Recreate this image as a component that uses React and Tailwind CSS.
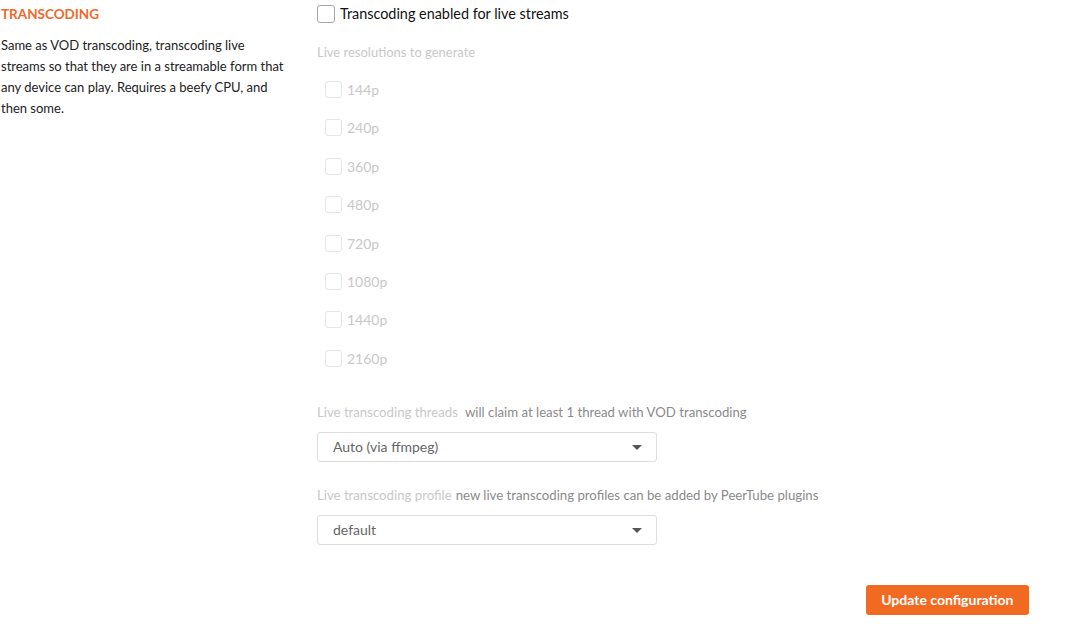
import React from "react";

const res = ["144p", "240p", "360p", "480p", "720p", "1080p", "1440p", "2160p"];

function Caret() {
  return (
    <svg width="10" height="6" viewBox="0 0 10 6" className="absolute right-[14px] top-[12px]">
      <path d="M0 0 L10 0 L5 5 Z" fill="#555" />
    </svg>
  );
}

export default function App() {
  return (
    <div className="w-[1067px] h-[638px] bg-white overflow-hidden" style={{ fontFamily: "Lato, 'Noto Sans', sans-serif" }}>
      <div className="flex">
        <div className="w-[317px] shrink-0 pl-[1px] pt-[6px]">
          <div className="text-[13.5px] font-bold text-[#f1682a] leading-[16px]">TRANSCODING</div>
          <p className="mt-[13px] w-[290px] text-[13px] leading-[21px] text-[#222]">
            Same as VOD transcoding, transcoding live streams so that they are in a streamable form that any device can play. Requires a beefy CPU, and then some.
          </p>
        </div>
        <div className="flex-1 pr-[38px]">
          <label className="flex items-center h-[18px] mt-[5px]">
            <span className="w-[18px] h-[18px] rounded-[3px] border border-[#a6a6a6] bg-white shrink-0"></span>
            <span className="ml-[5px] text-[14.4px] text-[#111]">Transcoding enabled for live streams</span>
          </label>
          <div className="mt-[21px] text-[13px] leading-[16px] text-[#c8c8c8]">Live resolutions to generate</div>
          <div className="mt-[21px] pl-[8px] flex flex-col gap-[21.4px]">
            {res.map((r) => (
              <div key={r} className="flex items-center h-[17px]">
                <span className="w-[17px] h-[17px] rounded-[3px] border border-[#e5e5e5] shrink-0"></span>
                <span className="ml-[5px] text-[14px] text-[#c8c8c8]">{r}</span>
              </div>
            ))}
          </div>
          <div className="mt-[37px] text-[13.2px] leading-[16px]">
            <span className="text-[#c8c8c8]">Live transcoding threads</span>
            <span className="ml-[7px] text-[#8a8a8a]">will claim at least 1 thread with VOD transcoding</span>
          </div>
          <div className="relative mt-[12px] w-[340px] h-[30px] border border-[#dedede] rounded-[3px] flex items-center pl-[15px] text-[14px] text-[#666]">
            Auto (via ffmpeg)
            <Caret />
          </div>
          <div className="mt-[25px] text-[13.2px] leading-[16px]">
            <span className="text-[#c8c8c8]">Live transcoding profile</span>
            <span className="ml-[4px] text-[#8a8a8a]">new live transcoding profiles can be added by PeerTube plugins</span>
          </div>
          <div className="relative mt-[12px] w-[340px] h-[30px] border border-[#dedede] rounded-[3px] flex items-center pl-[15px] text-[14px] text-[#666]">
            default
            <Caret />
          </div>
          <div className="flex justify-end mt-[40px]">
            <button className="h-[30px] px-[15.5px] rounded-[3px] bg-[#f26a22] text-white font-bold text-[14px]">Update configuration</button>
          </div>
        </div>
      </div>
    </div>
  );
}
